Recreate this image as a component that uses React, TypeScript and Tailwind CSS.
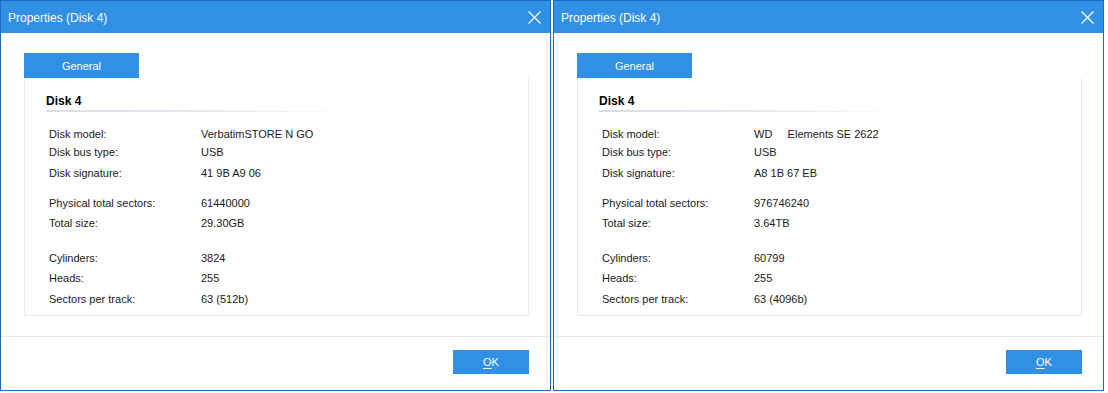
type Row = { label: string; value: string; gap: string };

const leftRows: Row[] = [
  { label: "Disk model:", value: "VerbatimSTORE N GO", gap: "mt-0" },
  { label: "Disk bus type:", value: "USB", gap: "mt-0" },
  { label: "Disk signature:", value: "41 9B A9 06", gap: "mt-[3px]" },
  { label: "Physical total sectors:", value: "61440000", gap: "mt-[12px]" },
  { label: "Total size:", value: "29.30GB", gap: "mt-[2px]" },
  { label: "Cylinders:", value: "3824", gap: "mt-[17px]" },
  { label: "Heads:", value: "255", gap: "mt-[2px]" },
  { label: "Sectors per track:", value: "63 (512b)", gap: "mt-[3px]" },
];

const rightRows: Row[] = [
  { label: "Disk model:", value: "WD     Elements SE 2622", gap: "mt-0" },
  { label: "Disk bus type:", value: "USB", gap: "mt-0" },
  { label: "Disk signature:", value: "A8 1B 67 EB", gap: "mt-[3px]" },
  { label: "Physical total sectors:", value: "976746240", gap: "mt-[12px]" },
  { label: "Total size:", value: "3.64TB", gap: "mt-[2px]" },
  { label: "Cylinders:", value: "60799", gap: "mt-[17px]" },
  { label: "Heads:", value: "255", gap: "mt-[2px]" },
  { label: "Sectors per track:", value: "63 (4096b)", gap: "mt-[3px]" },
];

function Dialog({ rows }: { rows: Row[] }) {
  return (
    <div className="flex h-[391px] w-[551px] shrink-0 flex-col border border-[#1b6cc0] bg-white">
      {/* title bar */}
      <div className="flex h-[32px] items-center justify-between bg-[#3090e6] pl-[7px] pr-[9px] pt-[1px]">
        <span className="text-[12px] text-white">Properties (Disk 4)</span>
        <svg width="13" height="13" viewBox="0 0 13 13" className="text-white">
          <path d="M0.5 0.5 L12.5 12.5 M12.5 0.5 L0.5 12.5" stroke="currentColor" strokeWidth="1.2" fill="none" />
        </svg>
      </div>

      {/* tab */}
      <div className="ml-[23px] mt-[20px] flex h-[25px] w-[115px] items-center justify-center bg-[#3090e6] pt-[1px] text-[11px] text-white">
        General
      </div>

      {/* panel */}
      <div className="ml-[23px] h-[238px] w-[505px] border border-t-0 border-[#e6ebf1] pl-[21px] pt-[16px]">
        <div className="text-[12px] font-bold leading-[15px] text-black">Disk 4</div>
        <div className="mt-[1px] h-[2px] w-[300px] bg-gradient-to-r from-[#d8dde6] via-[#e3e7ee] to-white" />
        <div className="ml-[3px] mt-[13px] flex flex-col text-[11px] text-[#1a1a1a]">
          {rows.map((r) => (
            <div key={r.label} className={`flex h-[18px] items-center ${r.gap}`}>
              <span className="w-[152px] shrink-0">{r.label}</span>
              <span className="whitespace-pre">{r.value}</span>
            </div>
          ))}
        </div>
      </div>

      <div className="mt-[20px] h-[1px] w-full bg-[#e3eaf3]" />

      <div className="mt-[13px] flex justify-end pr-[21px]">
        <button className="flex h-[24px] w-[76px] items-center justify-center bg-[#3090e6] text-[11px] text-white">
          <span>
            <span className="underline underline-offset-2">O</span>K
          </span>
        </button>
      </div>
    </div>
  );
}

export default function App() {
  return (
    <div className="flex h-[393px] w-[1108px] gap-[2px] bg-white font-['Liberation_Sans',Arial,sans-serif]">
      <Dialog rows={leftRows} />
      <Dialog rows={rightRows} />
    </div>
  );
}
